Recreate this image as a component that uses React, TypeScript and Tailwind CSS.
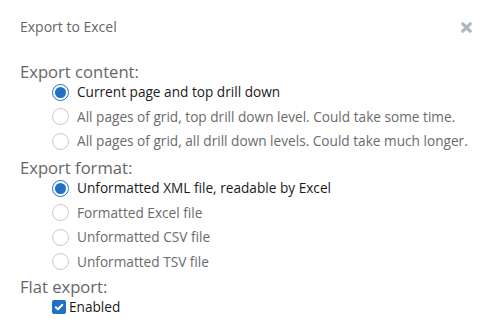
import { useState } from "react";

const contentOptions = [
  "Current page and top drill down",
  "All pages of grid, top drill down level. Could take some time.",
  "All pages of grid, all drill down levels. Could take much longer.",
];

const formatOptions = [
  "Unformatted XML file, readable by Excel",
  "Formatted Excel file",
  "Unformatted CSV file",
  "Unformatted TSV file",
];

export default function App() {
  const [content, setContent] = useState(0);
  const [format, setFormat] = useState(0);
  const [flat, setFlat] = useState(true);

  return (
    <div
      className="h-[334px] w-[490px] bg-white text-[#666]"
      style={{ fontFamily: '"Open Sans", "Liberation Sans", sans-serif' }}
    >
      <div className="flex items-center justify-between px-5 pt-4">
        <h1 className="text-[14px] leading-[22px] text-[#666]">Export to Excel</h1>
        <button type="button" className="-mr-[2px] flex h-[22px] w-[12px] items-center justify-center">
          <svg width="11" height="11" viewBox="0 0 11 11">
            <path d="M1.8 1.8 L9.2 9.2 M9.2 1.8 L1.8 9.2" stroke="#aeb7c0" strokeWidth="3.2" strokeLinecap="round" />
          </svg>
        </button>
      </div>

      <div className="mt-[26px] px-5">
        <SectionLabel text="Export content:" />
        {contentOptions.map((opt, i) => (
          <RadioRow key={opt} label={opt} checked={content === i} onClick={() => setContent(i)} />
        ))}

        <div className="mt-[6.5px]">
          <SectionLabel text="Export format:" />
        </div>
        {formatOptions.map((opt, i) => (
          <RadioRow key={opt} label={opt} checked={format === i} onClick={() => setFormat(i)} />
        ))}

        <div className="mt-[5px]">
          <SectionLabel text="Flat export:" />
        </div>
        <button
          type="button"
          onClick={() => setFlat(!flat)}
          className="ml-[32px] flex h-[24px] items-center gap-[3px] whitespace-nowrap text-[13.65px] text-[#1a1a1a]"
        >
          <span
            className={`flex h-[14px] w-[14px] items-center justify-center rounded-[2px] ${
              flat ? "bg-[#1f72c3]" : "border border-[#bbb] bg-white"
            }`}
          >
            {flat && (
              <svg width="10" height="10" viewBox="0 0 10 10">
                <path d="M1.8 5.2 L4 7.3 L8.3 2.7" fill="none" stroke="white" strokeWidth="2" strokeLinecap="round" strokeLinejoin="round" />
              </svg>
            )}
          </span>
          Enabled
        </button>
      </div>
    </div>
  );
}

function SectionLabel({ text }: { text: string }) {
  return <h2 className="text-[16.6px] leading-[16px] text-[#666]">{text}</h2>;
}

function RadioRow({
  label,
  checked,
  onClick,
}: {
  label: string;
  checked: boolean;
  onClick: () => void;
}) {
  return (
    <button
      type="button"
      onClick={onClick}
      className="ml-[32px] flex h-[24.5px] items-center gap-[8px] whitespace-nowrap text-left text-[13.65px]"
    >
      <span
        className={`flex h-[17px] w-[17px] shrink-0 items-center justify-center rounded-full border ${
          checked ? "border-[#1f72c3]" : "border-[#c8c8c8]"
        }`}
      >
        {checked && <span className="h-[11px] w-[11px] rounded-full bg-[#1f72c3]" />}
      </span>
      <span className={checked ? "text-[#1a1a1a]" : "text-[#6b6b6b]"}>{label}</span>
    </button>
  );
}
